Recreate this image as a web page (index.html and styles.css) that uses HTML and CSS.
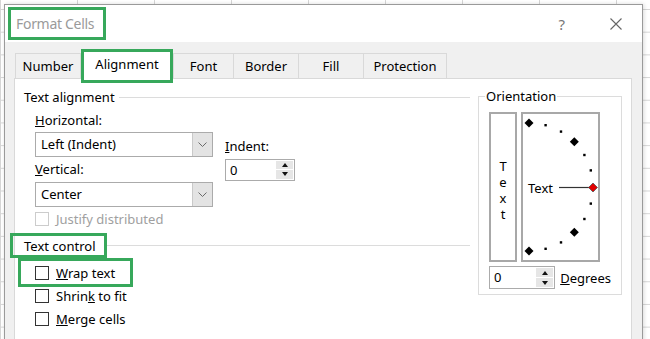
FILE: index.html
```html
<html><head><meta charset="UTF-8">
<meta name="viewport" content="width=device-width, initial-scale=1.0">
<title>Format Cells</title>
<link rel="stylesheet" href="styles.css">
</head>
<body>
    <div class="dialog">
        <div class="titlebar">
            <span class="title mark">Format Cells</span>
            <span class="title-help">?</span>
            <span class="title-close">
                <svg width="12" height="12" viewBox="0 0 12 12">
                    <path d="M0.5 0.5L11.5 11.5M11.5 0.5L0.5 11.5" stroke="#666" stroke-width="1.1" fill="none"/>
                </svg>
            </span>
        </div>

        <div class="dialog-body">
            <div class="tabs">
                <div class="tab tab-number">Number</div>
                <div class="tab tab-active mark">Alignment</div>
                <div class="tab tab-font">Font</div>
                <div class="tab tab-border">Border</div>
                <div class="tab tab-fill">Fill</div>
                <div class="tab tab-protection">Protection</div>
            </div>

            <div class="panel">
                <div class="col-left">
                    <div class="group-head">
                        <span class="group-label">Text alignment</span>
                        <span class="group-rule"></span>
                    </div>

                    <div class="align-grid">
                        <div class="field-label lbl-h"><u>H</u>orizontal:</div>
                        <div class="select sel-h">
                            <span class="select-value">Left (Indent)</span>
                            <span class="select-btn">
                                <svg width="9" height="5" viewBox="0 0 9 5"><path d="M0.5 0.5L4.5 4.5L8.5 0.5" stroke="#6a6a6a" stroke-width="1" fill="none"/></svg>
                            </span>
                        </div>
                        <div class="field-label lbl-indent"><u>I</u>ndent:</div>
                        <div class="field-label lbl-v"><u>V</u>ertical:</div>
                        <div class="spin spin-indent">
                            <span class="spin-value">0</span>
                            <span class="spin-btns">
                                <span class="spin-up"></span>
                                <span class="spin-down"></span>
                            </span>
                        </div>
                        <div class="select sel-v">
                            <span class="select-value">Center</span>
                            <span class="select-btn">
                                <svg width="9" height="5" viewBox="0 0 9 5"><path d="M0.5 0.5L4.5 4.5L8.5 0.5" stroke="#6a6a6a" stroke-width="1" fill="none"/></svg>
                            </span>
                        </div>
                    </div>

                    <div class="check-row is-disabled"><span class="box"></span><span>Justify distributed</span></div>

                    <div class="group-head head-control">
                        <span class="group-label mark">Text control</span>
                        <span class="group-rule"></span>
                    </div>

                    <div class="check-row row-wrap mark"><span class="box"></span><span><u>W</u>rap text</span></div>
                    <div class="check-row"><span class="box"></span><span>Shrin<u>k</u> to fit</span></div>
                    <div class="check-row"><span class="box"></span><span><u>M</u>erge cells</span></div>
                </div>

                <fieldset class="orient">
                    <legend>Orientation</legend>
                    <div class="orient-boxes">
                        <div class="vtext"><span class="vtext-word">Text</span></div>
                        <div class="dial">
                            <svg width="75" height="146" viewBox="0 0 75 146">
                                <g fill="#000">
                                    <polygon points="6,4.5 10.5,9 6,13.5 1.5,9"/>
                                    <rect x="21.4" y="10" width="2.4" height="2.4"/>
                                    <rect x="36.8" y="16.4" width="2.4" height="2.4"/>
                                    <polygon points="51.3,23.2 55.8,27.7 51.3,32.2 46.8,27.7"/>
                                    <rect x="60.2" y="39.8" width="2.4" height="2.4"/>
                                    <rect x="66.6" y="55.2" width="2.4" height="2.4"/>
                                    <rect x="66.6" y="88.4" width="2.4" height="2.4"/>
                                    <rect x="60.2" y="103.8" width="2.4" height="2.4"/>
                                    <polygon points="51.3,113.8 55.8,118.3 51.3,122.8 46.8,118.3"/>
                                    <rect x="36.8" y="127.2" width="2.4" height="2.4"/>
                                    <rect x="21.4" y="133.6" width="2.4" height="2.4"/>
                                    <polygon points="6,132.5 10.5,137 6,141.5 1.5,137"/>
                                </g>
                                <line x1="36" y1="73.5" x2="66" y2="73.5" stroke="#333" stroke-width="1.2"/>
                                <polygon points="70,69 74.5,73.5 70,78 65.5,73.5" fill="#e00000" stroke="#555" stroke-width="0.8"/>
                                <text x="5" y="78.5" class="dial-text">Text</text>
                            </svg>
                        </div>
                    </div>
                    <div class="degrees-row">
                        <div class="spin spin-degrees">
                            <span class="spin-value">0</span>
                            <span class="spin-btns">
                                <span class="spin-up"></span>
                                <span class="spin-down"></span>
                            </span>
                        </div>
                        <span class="degrees-label"><u>D</u>egrees</span>
                    </div>
                </fieldset>
            </div>
        </div>
    </div>
</body>
</html>
```

FILE: styles.css
```css
:root {
    --mark-color: #37a85b;
    --dialog-bg: #f0f0f0;
    --tab-border: #d9d9d9;
    --field-border: #ababab;
    --text-color: #000000;
    --muted-color: #a0a0a0;
    --grid-color: #d6d6d6;
}

body {
    margin: 0;
    height: 339px;
    overflow: hidden;
    font-family: "Noto Sans", "Open Sans", sans-serif;
    font-size: 13px;
    color: var(--text-color);
    background-color: #ffffff;
    background-image:
        linear-gradient(to right, var(--grid-color) 1px, transparent 1px),
        linear-gradient(to bottom, var(--grid-color) 1px, transparent 1px);
    background-size: 77px 22.7px;
    background-position: 0 9px;
}

/* green annotation frames */
.mark {
    outline: 3px solid var(--mark-color);
}

.dialog {
    margin: 4px 0 0 4px;
    width: 639px;
    height: 400px;
    box-sizing: border-box;
    border: 1px solid #9a9a9a;
    background-color: var(--dialog-bg);
    box-shadow: 1px 0 4px rgba(0, 0, 0, 0.15);
}

.titlebar {
    height: 37px;
    background-color: #ffffff;
    display: flex;
    align-items: center;
    padding: 0 20px 0 6px;
}

.title {
    height: 27px;
    line-height: 27px;
    padding: 0 9px 0 5px;
    font-size: 14px;
    letter-spacing: -0.3px;
    color: #9a9a9a;
}

.title-help {
    margin-left: auto;
    font-size: 15px;
    color: #777777;
    line-height: 20px;
}

.title-close {
    margin-left: 45px;
    display: flex;
}

.dialog-body {
    padding: 10px 10px 0 9px;
}

.tabs {
    display: flex;
    align-items: flex-end;
    margin-left: 1px;
    position: relative;
    z-index: 1;
}

.tab {
    height: 25px;
    box-sizing: border-box;
    line-height: 24px;
    text-align: center;
    border: 1px solid var(--tab-border);
    border-bottom: none;
    background-color: var(--dialog-bg);
}

.tab-number { width: 66px; }
.tab-font { width: 61px; }
.tab-border { width: 66px; margin-left: -1px; }
.tab-fill { width: 66px; margin-left: -1px; }
.tab-protection { width: 84px; margin-left: -1px; }

.tab-active {
    width: 86px;
    height: 28px;
    margin: 0 3px -2px 3px;
    padding-bottom: 4px;
    border: none;
    background-color: #ffffff;
}

.panel {
    display: flex;
    align-items: flex-start;
    height: 300px;
    box-sizing: border-box;
    padding: 10px 9px 0 9px;
    background-color: #ffffff;
    border: 1px solid var(--tab-border);
}

.col-left {
    width: 446px;
    flex-shrink: 0;
}

.group-head {
    display: flex;
    align-items: center;
}

.group-label {
    line-height: 16px;
}

.group-rule {
    flex: 1;
    height: 1px;
    margin-left: 4px;
    background-color: #dcdcdc;
}

.head-control {
    margin-top: 9px;
}

.head-control .group-label {
    height: 19px;
    box-sizing: border-box;
    padding: 2px 8px 0 11px;
    margin-left: -11px;
    line-height: 17px;
}

.head-control .group-rule {
    margin-left: 3px;
}

.align-grid {
    display: grid;
    grid-template-columns: 178px 72px;
    grid-template-rows: 20px 25px 25px 25px;
    column-gap: 12px;
    margin: 7px 0 0 11px;
}

.field-label {
    line-height: 16px;
}

.lbl-h { grid-column: 1; grid-row: 1; }
.sel-h { grid-column: 1; grid-row: 2; }
.lbl-indent { grid-column: 2; grid-row: 2; align-self: end; margin-bottom: 3px; }
.lbl-v { grid-column: 1; grid-row: 3; line-height: 25px; }
.spin-indent { grid-column: 2; grid-row: 3; align-self: center; width: 70px; }
.sel-v { grid-column: 1; grid-row: 4; }

.select {
    display: flex;
    height: 25px;
    box-sizing: border-box;
    border: 1px solid var(--field-border);
    background-color: #ffffff;
}

.select-value {
    flex: 1;
    padding-left: 5px;
    line-height: 23px;
}

.select-btn {
    width: 19px;
    display: flex;
    align-items: center;
    justify-content: center;
    background-color: #e3e3e3;
    border-left: 1px solid #c9c9c9;
}

.spin {
    display: flex;
    height: 22px;
    box-sizing: border-box;
    border: 1px solid var(--field-border);
    background-color: #ffffff;
}

.spin-value {
    flex: 1;
    padding-left: 4px;
    line-height: 20px;
}

.spin-btns {
    width: 17px;
    margin: 1px;
    display: flex;
    flex-direction: column;
    gap: 1px;
}

.spin-up,
.spin-down {
    flex: 1;
    display: flex;
    align-items: center;
    justify-content: center;
    background-color: #e6e6e6;
}

.spin-up::after,
.spin-down::after {
    content: "";
    border-left: 3.5px solid transparent;
    border-right: 3.5px solid transparent;
}

.spin-up::after { border-bottom: 4px solid #111111; }
.spin-down::after { border-top: 4px solid #111111; }

.check-row {
    display: flex;
    align-items: center;
    gap: 7px;
    height: 23px;
    padding-left: 11px;
}

.check-row .box {
    width: 14px;
    height: 14px;
    box-sizing: border-box;
    border: 1px solid #333333;
    background-color: #ffffff;
}

.check-row.is-disabled {
    height: 16px;
    margin-top: 4px;
    color: var(--muted-color);
}

.check-row.is-disabled .box {
    border-color: #cccccc;
}

.row-wrap {
    width: fit-content;
    margin: 6px 0 0 -3px;
    padding: 0 15px 0 14px;
}

.orient {
    width: 145px;
    box-sizing: border-box;
    margin: 0 0 0 8px;
    padding: 0 10px 5px 10px;
    border: 1px solid #dcdcdc;
    min-width: 0;
}

.orient legend {
    margin-left: -4px;
    padding: 0 1px;
    line-height: 14px;
}

.orient-boxes {
    display: flex;
    gap: 4px;
    margin-top: 9px;
}

.vtext {
    width: 28px;
    height: 150px;
    box-sizing: border-box;
    border: 2px solid #a8a8a8;
    background-color: #ffffff;
    display: flex;
    align-items: center;
    justify-content: center;
    padding-top: 4px;
}

.vtext-word {
    writing-mode: vertical-lr;
    text-orientation: upright;
    letter-spacing: -2px;
    line-height: 16px;
}

.dial {
    width: 79px;
    height: 150px;
    box-sizing: border-box;
    border: 2px solid #a8a8a8;
    background-color: #ffffff;
}

.dial svg {
    display: block;
}

.dial-text {
    font-family: "Noto Sans", "Open Sans", sans-serif;
    font-size: 13px;
    fill: #000000;
}

.degrees-row {
    display: flex;
    align-items: center;
    gap: 5px;
    margin-top: 4px;
}

.spin-degrees {
    width: 70px;
    height: 23px;
}

.degrees-label {
    line-height: 16px;
}
```
